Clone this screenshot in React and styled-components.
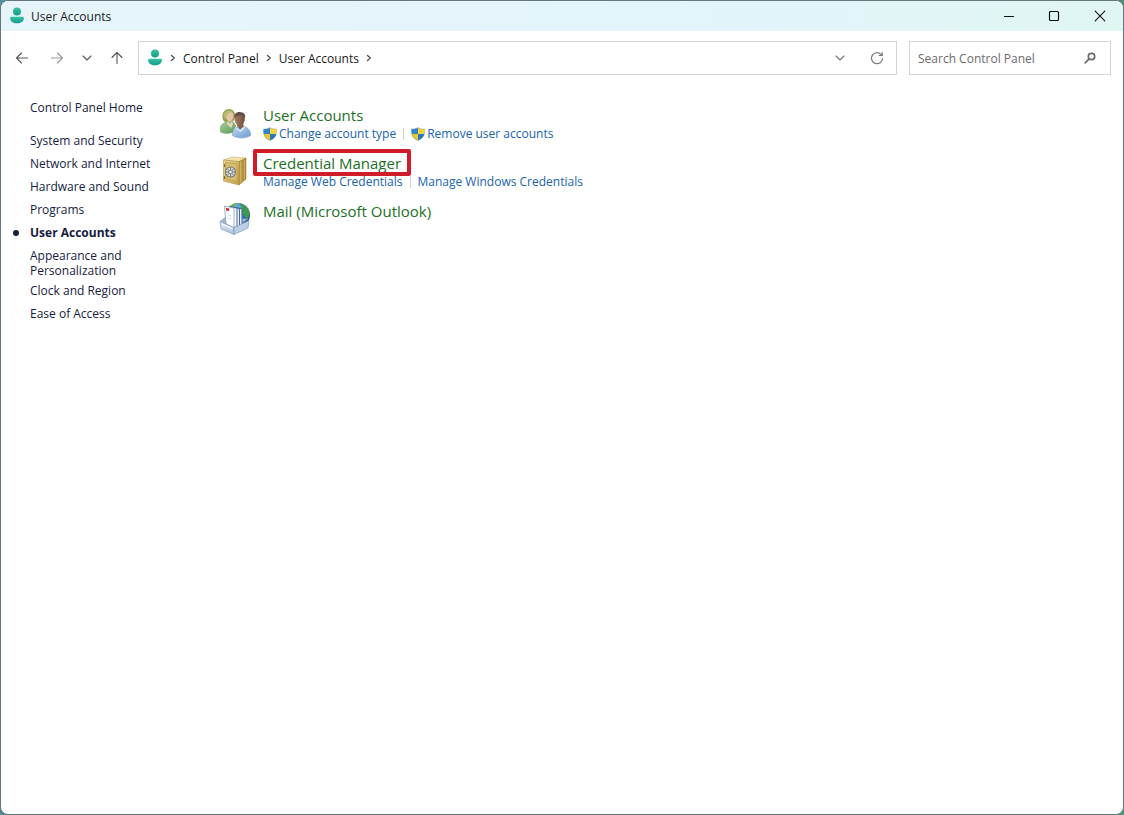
import React, { useId } from 'react';
import styled, { createGlobalStyle, css, ThemeProvider } from 'styled-components';

const theme = {
  text: '#1a1a1a',
  nav: '#151c3e',
  link: '#1763ae',
  heading: '#1c701f',
  border: '#d4d4d4',
  muted: '#6b6b6b',
  highlight: '#d01c28',
  font: "'Open Sans', 'Noto Sans', sans-serif",
};

const GlobalStyle = createGlobalStyle`
  *, *::before, *::after {
    box-sizing: border-box;
  }

  body {
    margin: 0;
    background: linear-gradient(100deg, #4a93a3 0%, #56707a 50%, #4f9478 100%);
    font-family: ${theme.font};
    font-size: 12px;
    line-height: 15px;
    color: ${theme.text};
  }
`;

const Window = styled.div`
  display: flex;
  flex-direction: column;
  min-height: 100vh;
  border: 1px solid #66777b;
  border-radius: 8px;
  background: #fff;
  overflow: hidden;
`;

const TitleBar = styled.header`
  display: flex;
  align-items: center;
  height: 30px;
  padding-left: 8px;
  background: linear-gradient(90deg, #e6f5f9, #e3f4fb 60%, #e0f6f3);
`;

const WindowTitle = styled.h1`
  flex: 1;
  margin: 0 0 0 6px;
  font-size: 12px;
  font-weight: 400;
`;

const IconButton = styled.button`
  display: flex;
  align-items: center;
  justify-content: center;
  flex: none;
  width: ${({ $width }) => $width || 32}px;
  height: 30px;
  padding: 0;
  border: 0;
  background: transparent;
  color: ${({ $color }) => $color || '#555'};
`;

const Toolbar = styled.div`
  display: flex;
  align-items: center;
  padding: 10px 12px 0 5px;
`;

const NavButtons = styled.nav`
  display: flex;
  gap: 3px;
  margin-right: 5px;
`;

const fieldBox = css`
  display: flex;
  align-items: center;
  height: 34px;
  border: 1px solid ${theme.border};
  background: #fff;
`;

const AddressBar = styled.div`
  ${fieldBox}
  flex: 1;
  padding: 0 3px 0 8px;
`;

const Crumbs = styled.ol`
  display: flex;
  flex: 1;
  align-items: center;
  margin: 0;
  padding: 0;
  list-style: none;
`;

const Crumb = styled.li`
  display: flex;
  align-items: center;
`;

const CrumbLink = styled.a`
  color: ${theme.text};
  text-decoration: none;
`;

const CrumbArrow = styled.span`
  display: flex;
  justify-content: center;
  width: 20px;
  color: #555;
`;

const SearchBox = styled.form`
  ${fieldBox}
  width: 202px;
  margin-left: 12px;
  padding: 0 4px 0 8px;
`;

const SearchInput = styled.input`
  flex: 1;
  min-width: 0;
  padding: 0;
  border: 0;
  outline: 0;
  background: transparent;
  color: ${theme.text};
  font: inherit;

  &::placeholder {
    color: ${theme.muted};
    opacity: 1;
  }
`;

const Body = styled.div`
  display: flex;
  flex: 1;
`;

const Sidebar = styled.nav`
  width: 218px;
  padding: 25px 68px 0 12px;
`;

const SideLink = styled.a`
  display: block;
  color: ${theme.nav};
  text-decoration: none;
  font-weight: ${({ $active }) => ($active ? 700 : 400)};
`;

const HomeLink = styled(SideLink)`
  margin: 0 0 18px 17px;
`;

const SideList = styled.ul`
  display: grid;
  gap: 5px;
  margin: 0;
  padding: 0;
  list-style: none;
`;

const SideItem = styled.li`
  display: grid;
  grid-template-columns: 17px 1fr;
  min-height: 18px;
`;

const Bullet = styled.span`
  width: 6px;
  height: 6px;
  margin-top: 5px;
  border-radius: 50%;
  background: ${theme.nav};
`;

const Main = styled.main`
  display: flex;
  flex: 1;
  flex-direction: column;
  gap: 10px;
  padding-top: 31px;
`;

const Category = styled.section`
  display: flex;
  gap: 12px;
  min-height: 38px;
`;

const CategoryIcon = styled.span`
  flex: none;
  width: 32px;
  height: 32px;
  margin-top: 1px;
`;

const CategoryTitle = styled.h2`
  position: relative;
  width: fit-content;
  margin: 0;
  font-size: 15px;
  font-weight: 400;
  line-height: 18px;
`;

const CategoryLink = styled.a`
  color: ${theme.heading};
  text-decoration: none;
`;

const Highlight = styled.span`
  position: absolute;
  inset: -5px -10px -4px;
  border: 4px solid ${theme.highlight};
  border-radius: 2px;
  pointer-events: none;
`;

const TaskList = styled.ul`
  display: flex;
  margin: 0;
  padding: 0;
  list-style: none;
  line-height: 20px;
`;

const Task = styled.li`
  display: flex;
  align-items: center;

  & + &::before {
    content: '';
    width: 1px;
    height: 12px;
    margin: 0 7px;
    background: #cfd3dc;
  }
`;

const TaskLink = styled.a`
  display: flex;
  align-items: center;
  gap: 2px;
  color: ${theme.link};
  text-decoration: none;
`;

const Stroke = ({ size = 14, width = 1.1, children }) => (
  <svg
    width={size}
    height={size}
    viewBox={`0 0 ${size} ${size}`}
    fill="none"
    stroke="currentColor"
    strokeWidth={width}
    strokeLinecap="round"
    strokeLinejoin="round"
    aria-hidden="true"
  >
    {children}
  </svg>
);

const PersonIcon = () => {
  const id = useId();
  return (
    <svg width="16" height="18" viewBox="0 0 16 18" aria-hidden="true">
      <defs>
        <linearGradient id={id} x1="0" y1="0" x2="0" y2="1">
          <stop offset="0" stopColor="#35c3a2" />
          <stop offset="1" stopColor="#149a8b" />
        </linearGradient>
      </defs>
      <circle cx="8" cy="4.500" r="4" fill={`url(#${id})`} />
      <path d="M2.500 9.800h11c.8 0 1.400.6 1.400 1.400 0 3-3 5.100-6.900 5.100s-6.900-2.100-6.900-5.100c0-.8.6-1.400 1.400-1.400z" fill={`url(#${id})`} />
    </svg>
  );
};

const ShieldIcon = () => (
  <svg width="14" height="14" viewBox="0 0 14 14" aria-hidden="true">
    <path d="M7 .5C5.300 1.700 3 2 .4 2 0 7.500 2 11.500 7 13.600z" fill="#2f86cc" />
    <path d="M7 .5C8.700 1.700 11 2 13.600 2 14 7.500 12 11.500 7 13.600z" fill="#f6d13a" />
    <path d="M.5 7H7v6.600C3.200 12 1.200 9.900.5 7z" fill="#efc72c" />
    <path d="M7 7h6.500c-.7 2.900-2.700 5-6.500 6.600z" fill="#2878c0" />
    <path d="M7 .5C5.300 1.700 3 2 .4 2 0 7.500 2 11.500 7 13.600c5-2.100 7-6.100 6.600-11.600C11 2 8.700 1.700 7 .5z" fill="none" stroke="#7c9aa5" strokeWidth=".4" />
  </svg>
);

const UsersIcon = () => (
  <svg width="32" height="32" viewBox="0 0 32 32" aria-hidden="true">
    <defs>
      <linearGradient id="greenShirt" x1="0" y1="0" x2="1" y2="1">
        <stop offset="0" stopColor="#a5cf93" />
        <stop offset="1" stopColor="#5c9a5c" />
      </linearGradient>
      <linearGradient id="blueShirt" x1="0" y1="0" x2="1" y2="1">
        <stop offset="0" stopColor="#bed6f0" />
        <stop offset="1" stopColor="#6e9bd0" />
      </linearGradient>
      <linearGradient id="darkSkin" x1="0" y1="0" x2="1" y2="0">
        <stop offset="0" stopColor="#a67d62" />
        <stop offset="1" stopColor="#72503e" />
      </linearGradient>
    </defs>
    <path d="M1.500 25c-.8-5 .5-8 4.500-9.500l8-.5c2 1 3 4 3 8.500-4 3-11 4-15.500 1.500z" fill="url(#greenShirt)" stroke="#6c9c67" strokeWidth=".5" />
    <path d="M4 13C2.500 8 4 2.500 9.500 2 15 1.800 16.500 6 16 11l-2 3.500-8 .5z" fill="#8e9f4f" />
    <path d="M7 8.500C7 5.500 9 4 11.500 4.500c2.500.5 3.500 3 3 5.500S12 14.500 10.500 14.500C8.500 14.500 7 12 7 8.500z" fill="#e9c2a1" />
    <path d="M4.500 9C5 4 10 1.500 14.500 5 11 5 8.500 6 7.500 9l-1 4z" fill="#b5bd6d" />
    <path d="M8.500 14.500l2.500 2.500 2-2.500 1 3-2 3.500-4-4z" fill="#f1d5bb" />
    <path d="M13.500 28.500C13 24 14.500 21 18 20l7.500-.5c4 1.500 6.500 5 6 9-4 3-13.500 3.500-18 0z" fill="url(#blueShirt)" stroke="#6d93c1" strokeWidth=".5" />
    <path d="M17.500 18l3.500 4.500 3.500-3v-3z" fill="#835e49" />
    <path d="M16.500 20l4.500 3.500 4.500-4 .5 1.500-4.500 4L16 21z" fill="#e2edf9" />
    <path d="M15.500 12c0-4 2-6 5-6 4 0 5.800 2.500 5.300 6.500-.5 3.500-2.300 6.500-5 6.500s-5-3.500-5.300-7z" fill="url(#darkSkin)" />
    <path d="M15.500 11C15 7.500 17 5 20.500 5c4.500 0 6.500 3 5.500 6-1-1-1.500-2.500-2.500-3-3 .5-6 .5-8 3z" fill="#5d5049" />
  </svg>
);

const SafeIcon = () => (
  <svg width="32" height="32" viewBox="0 0 32 32" aria-hidden="true">
    <defs>
      <linearGradient id="safeFront" x1="0" y1="0" x2="1" y2="1">
        <stop offset="0" stopColor="#ead88e" />
        <stop offset="1" stopColor="#c5a34e" />
      </linearGradient>
      <linearGradient id="safeSide" x1="0" y1="0" x2="1" y2="0">
        <stop offset="0" stopColor="#c6a34c" />
        <stop offset="1" stopColor="#a68638" />
      </linearGradient>
    </defs>
    <path d="M4.500 5L13 2l14 1-7 4z" fill="#f1e4ae" stroke="#c2a351" strokeWidth=".5" />
    <path d="M20 6.500L27 3v21l-7 6z" fill="url(#safeSide)" stroke="#9a7b35" strokeWidth=".5" />
    <path d="M4.500 5L20 6.500V30L4.500 26z" fill="url(#safeFront)" stroke="#a98c42" strokeWidth=".6" />
    <path d="M6.500 7.500L18 8.700v18L6.500 24z" fill="#d7bd6b" stroke="#aa8b42" strokeWidth=".5" />
    <circle cx="11.500" cy="17" r="5.500" fill="#77797a" />
    <circle cx="11.500" cy="17" r="4.500" fill="#d9dcda" />
    <path d="M11.500 12v10M6.500 17h10M8 13.500l7 7M15 13.500l-7 7" stroke="#73777a" strokeWidth="1" />
    <circle cx="11.500" cy="17" r="1.700" fill="#f5f5f1" stroke="#606466" strokeWidth=".7" />
    <path d="M5.500 9v3M5.500 21v3" stroke="#8c6d28" strokeWidth="1" />
    <path d="M21.500 7v20M25.500 5v19" stroke="#e4cf87" strokeWidth=".5" />
  </svg>
);

const MailIcon = () => (
  <svg width="32" height="32" viewBox="0 0 32 32" aria-hidden="true">
    <defs>
      <radialGradient id="globe" cx=".4" cy=".25" r=".8">
        <stop offset="0" stopColor="#80c3ea" />
        <stop offset=".6" stopColor="#2c72b7" />
        <stop offset="1" stopColor="#153d78" />
      </radialGradient>
      <linearGradient id="tray" x1="0" y1="0" x2="0" y2="1">
        <stop offset="0" stopColor="#e6eef7" />
        <stop offset="1" stopColor="#a9bfdb" />
      </linearGradient>
    </defs>
    <circle cx="19" cy="12" r="12" fill="url(#globe)" />
    <path d="M20 .1c6 .8 9.500 5.200 10.800 10.200-1 2.500-1.500 3.500-1.800 6.500l-3-3c-.5-3-4-4-4-7l1-2.500z" fill="#419a4b" />
    <path d="M9 6c2-4 6-6 10-5.900L15 4l-4 3z" fill="#67b55f" />
    <path d="M1 18.500l6-4.500 22 2-13 9z" fill="#a4bad7" stroke="#6887b0" strokeWidth=".5" />
    <path d="M16.500 4.500L23 6v17l-6-1z" fill="#e3ecf7" stroke="#345a90" strokeWidth=".9" />
    <path d="M13.500 4l7 1.500V24l-7-1z" fill="#edf3fb" stroke="#345a90" strokeWidth=".9" />
    <path d="M10.500 3.500L18 5v20l-7-2z" fill="#f7faff" stroke="#345a90" strokeWidth=".9" />
    <path d="M5.500 3L15 5v20l-8-4z" fill="#fff" stroke="#7890b1" strokeWidth=".7" />
    <path d="M7 4.800l3.200.6v2.800L7 7.500z" fill="#ce3232" />
    <path d="M8.500 12l4 1M8.500 15l4 1" stroke="#c6d2e2" strokeWidth=".8" />
    <path d="M1 18.500l14 6v7L2 26z" fill="url(#tray)" stroke="#7691b7" strokeWidth=".6" />
    <path d="M15 24.500l15-7-1 7.500-14 6.500z" fill="#bdcfe6" stroke="#6f8db5" strokeWidth=".6" />
    <path d="M3 21l10 4.500" stroke="#fff" strokeWidth="1" />
  </svg>
);

const ChevronRight = () => (
  <Stroke size={8} width={1.4}>
    <path d="M2.500 1.500L5.300 4 2.500 6.500" />
  </Stroke>
);

const ChevronDown = () => (
  <Stroke size={10}>
    <path d="M1 3l4 4 4-4" />
  </Stroke>
);

const sideItems = [
  'System and Security',
  'Network and Internet',
  'Hardware and Sound',
  'Programs',
  'User Accounts',
  'Appearance and Personalization',
  'Clock and Region',
  'Ease of Access',
];

const categories = [
  {
    title: 'User Accounts',
    icon: <UsersIcon />,
    shield: true,
    tasks: ['Change account type', 'Remove user accounts'],
  },
  {
    title: 'Credential Manager',
    icon: <SafeIcon />,
    highlighted: true,
    tasks: ['Manage Web Credentials', 'Manage Windows Credentials'],
  },
  {
    title: 'Mail (Microsoft Outlook)',
    icon: <MailIcon />,
    tasks: [],
  },
];

const crumbs = ['Control Panel', 'User Accounts'];

const App = () => (
  <ThemeProvider theme={theme}>
    <GlobalStyle />
    <Window>
      <TitleBar>
        <PersonIcon />
        <WindowTitle>User Accounts</WindowTitle>
        <IconButton type="button" aria-label="Minimize" $width={44} $color="#111">
          <Stroke size={12}>
            <path d="M1.500 6.500h9" />
          </Stroke>
        </IconButton>
        <IconButton type="button" aria-label="Maximize" $width={46} $color="#111">
          <Stroke size={12} width={1.2}>
            <rect x="1.500" y="1.500" width="9" height="9" rx="1" />
          </Stroke>
        </IconButton>
        <IconButton type="button" aria-label="Close" $width={46} $color="#111">
          <Stroke size={12}>
            <path d="M1.200 1.200l9.600 9.600M10.800 1.200l-9.600 9.600" />
          </Stroke>
        </IconButton>
      </TitleBar>

      <Toolbar>
        <NavButtons aria-label="History">
          <IconButton type="button" aria-label="Back">
            <Stroke>
              <path d="M12.500 7H1.500M6.500 2L1.500 7l5 5" />
            </Stroke>
          </IconButton>
          <IconButton type="button" aria-label="Forward" $color="#999">
            <Stroke>
              <path d="M1.500 7h11M7.500 2l5 5-5 5" />
            </Stroke>
          </IconButton>
          <IconButton type="button" aria-label="Recent locations" $width={22}>
            <ChevronDown />
          </IconButton>
          <IconButton type="button" aria-label="Up">
            <Stroke>
              <path d="M7 12.500V1.500M2 6.500l5-5 5 5" />
            </Stroke>
          </IconButton>
        </NavButtons>

        <AddressBar>
          <PersonIcon />
          <CrumbArrow>
            <ChevronRight />
          </CrumbArrow>
          <Crumbs>
            {crumbs.map(crumb => (
              <Crumb key={crumb}>
                <CrumbLink href="#">{crumb}</CrumbLink>
                <CrumbArrow>
                  <ChevronRight />
                </CrumbArrow>
              </Crumb>
            ))}
          </Crumbs>
          <IconButton type="button" aria-label="Previous locations" $width={42} $color="#777">
            <ChevronDown />
          </IconButton>
          <IconButton type="button" aria-label="Refresh" $color="#777">
            <Stroke width={1.2}>
              <path d="M12.500 7.500A5.500 5.500 0 1 1 10.800 3.200L12 4.400M12.200 1.500v3H9.200" />
            </Stroke>
          </IconButton>
        </AddressBar>

        <SearchBox role="search">
          <SearchInput type="text" aria-label="Search Control Panel" placeholder="Search Control Panel" />
          <IconButton type="submit" aria-label="Search" $color="#6d6d6d">
            <Stroke size={12} width={1.7}>
              <circle cx="7.500" cy="4.500" r="3.200" />
              <path d="M5.200 6.800L1.200 10.800" />
            </Stroke>
          </IconButton>
        </SearchBox>
      </Toolbar>

      <Body>
        <Sidebar aria-label="Control Panel">
          <HomeLink href="#">Control Panel Home</HomeLink>
          <SideList>
            {sideItems.map(item => {
              const active = item === 'User Accounts';
              return (
                <SideItem key={item}>
                  {active ? <Bullet /> : <span />}
                  <SideLink href="#" $active={active}>
                    {item}
                  </SideLink>
                </SideItem>
              );
            })}
          </SideList>
        </Sidebar>

        <Main>
          {categories.map(({ title, icon, tasks, shield, highlighted }) => (
            <Category key={title}>
              <CategoryIcon>{icon}</CategoryIcon>
              <div>
                <CategoryTitle>
                  <CategoryLink href="#">{title}</CategoryLink>
                  {highlighted && <Highlight />}
                </CategoryTitle>
                <TaskList>
                  {tasks.map(task => (
                    <Task key={task}>
                      <TaskLink href="#">
                        {shield && <ShieldIcon />}
                        {task}
                      </TaskLink>
                    </Task>
                  ))}
                </TaskList>
              </div>
            </Category>
          ))}
        </Main>
      </Body>
    </Window>
  </ThemeProvider>
);

export default App;
